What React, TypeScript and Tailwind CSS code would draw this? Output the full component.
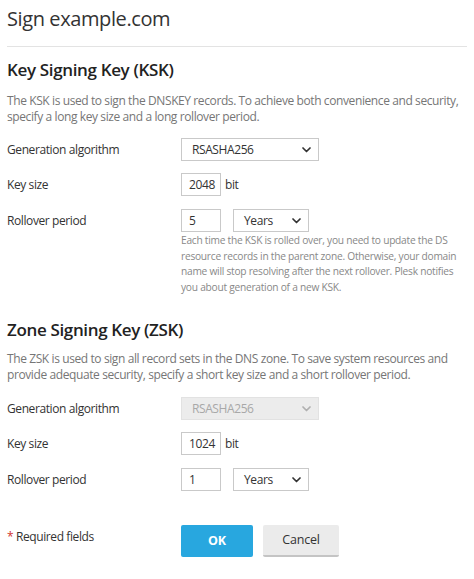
const Chevron = ({ color = "#333" }: { color?: string }) => (
  <svg width="9" height="6" viewBox="0 0 9 6" className="shrink-0">
    <polyline
      points="1,1 4.5,4.5 8,1"
      fill="none"
      stroke={color}
      strokeWidth="1.7"
      strokeLinecap="round"
      strokeLinejoin="round"
    />
  </svg>
);

const Select = ({
  value,
  width,
  disabled,
}: {
  value: string;
  width: string;
  disabled?: boolean;
}) => (
  <div
    className={`${width} h-[23px] flex items-center justify-between border pl-[10px] pr-[7px] text-[12px] tracking-[-0.4px] ${
      disabled
        ? "bg-[#ececec] border-[#e2e2e2] text-[#a8a8a8]"
        : "bg-white border-[#c9c9c9] text-[#333]"
    }`}
  >
    <span>{value}</span>
    <Chevron color={disabled ? "#b0b0b0" : "#333"} />
  </div>
);

const Input = ({ value }: { value: string }) => (
  <div className="w-[40px] h-[23px] flex items-center border border-[#c9c9c9] bg-white pl-[7px] text-[12px] tracking-[-0.4px] text-[#333]">
    {value}
  </div>
);

const Row = ({
  label,
  children,
}: {
  label: string;
  children: React.ReactNode;
}) => (
  <div className="flex items-center">
    <div className="w-[174px] text-[12px] tracking-[-0.4px] text-[#333]">
      {label}
    </div>
    {children}
  </div>
);

const Section = ({
  title,
  description,
  bits,
  period,
  disabled,
  children,
  top,
  descTop,
  rowsTop,
}: {
  title: string;
  description: string;
  bits: string;
  period: string;
  disabled?: boolean;
  children?: React.ReactNode;
  top: string;
  descTop: string;
  rowsTop: string;
}) => (
  <section className={top}>
    <h2 className="text-[17px] leading-[24px] tracking-[-0.35px] font-semibold text-[#222]">
      {title}
    </h2>
    <p
      className={`${descTop} text-[12px] leading-[16px] tracking-[-0.4px] text-[#767676] w-[462px]`}
    >
      {description}
    </p>
    <div className={`${rowsTop} flex flex-col`}>
      <Row label="Generation algorithm">
        <Select value="RSASHA256" width="w-[138px]" disabled={disabled} />
      </Row>
      <div className="mt-[12px]">
        <Row label="Key size">
          <Input value={bits} />
          <span className="ml-[4px] text-[12px] tracking-[-0.4px] text-[#333]">
            bit
          </span>
        </Row>
      </div>
      <div className="mt-[13px]">
        <Row label="Rollover period">
          <Input value={period} />
          <div className="ml-[12px]">
            <Select value="Years" width="w-[76px]" />
          </div>
        </Row>
      </div>
      {children}
    </div>
  </section>
);

export default function App() {
  return (
    <div className="w-[474px] h-[579px] bg-white pl-[7px] font-['Open_Sans',sans-serif] text-[#333] overflow-hidden">
      <h1 className="pt-[5px] text-[20px] leading-[28px] tracking-[-0.4px] text-[#333]">
        Sign example.com
      </h1>
      <div className="mt-[13px] h-px w-[460px] bg-[#e3e3e3]" />

      <Section
        title="Key Signing Key (KSK)"
        description="The KSK is used to sign the DNSKEY records. To achieve both convenience and security, specify a long key size and a long rollover period."
        bits="2048"
        period="5"
        top="mt-[11px]"
        descTop="mt-[11px]"
        rowsTop="mt-[13px]"
      >
        <p className="ml-[174px] mt-px w-[285px] text-[10.2px] leading-[15.5px] tracking-[-0.25px] text-[#888]">
          Each time the KSK is rolled over, you need to update the DS resource
          records in the parent zone. Otherwise, your domain name will stop
          resolving after the next rollover. Plesk notifies you about
          generation of a new KSK.
        </p>
      </Section>

      <Section
        title="Zone Signing Key (ZSK)"
        description="The ZSK is used to sign all record sets in the DNS zone. To save system resources and provide adequate security, specify a short key size and a short rollover period."
        bits="1024"
        period="1"
        disabled
        top="mt-[23px]"
        descTop="mt-[9px]"
        rowsTop="mt-[14px]"
      />

      <div className="mt-[34px] flex items-start">
        <div className="w-[174px] pt-[3px] text-[12px] leading-[18px] tracking-[-0.4px]">
          <span className="text-[#d0312d]">*</span> Required fields
        </div>
        <button className="w-[72px] h-[32px] rounded-[2px] bg-[#28a7df] text-[12.5px] font-bold text-white">
          OK
        </button>
        <button className="ml-[10px] w-[76px] h-[32px] rounded-[2px] bg-[#ebebeb] border-b-2 border-[#c4c4c4] text-[12.5px] tracking-[-0.2px] text-[#333]">
          Cancel
        </button>
      </div>
    </div>
  );
}
